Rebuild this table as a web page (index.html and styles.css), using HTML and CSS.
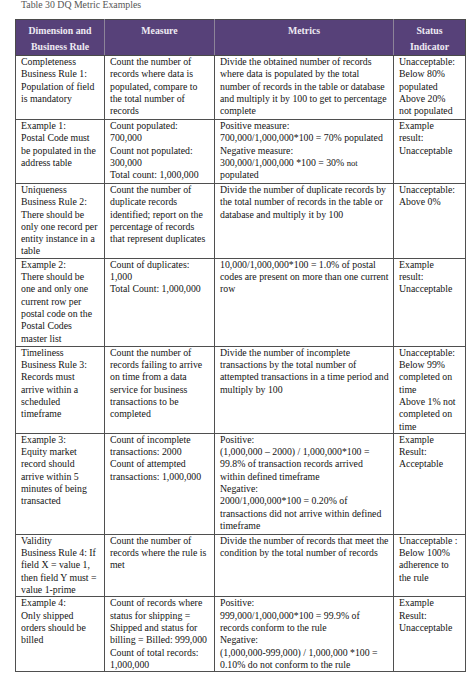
FILE: index.html
```html
<!DOCTYPE html>
<html lang="en">
<head>
<meta charset="utf-8">
<title>Table 30 DQ Metric Examples</title>
<link rel="stylesheet" href="styles.css">
</head>
<body>
<div class="caption">Table 30 DQ Metric Examples</div>
<table class="dq">
  <colgroup>
    <col class="c1"><col class="c2"><col class="c3"><col class="c4">
  </colgroup>
  <thead>
    <tr>
      <th>Dimension and<br>Business Rule</th>
      <th>Measure</th>
      <th>Metrics</th>
      <th>Status<br>Indicator</th>
    </tr>
  </thead>
  <tbody>
    <tr class="r1">
      <td>Completeness<br>Business Rule 1:<br>Population of field<br>is mandatory</td>
      <td>Count the number of<br>records where data is<br>populated, compare to<br>the total number of<br>records</td>
      <td>Divide the obtained number of records<br>where data is populated by the total<br>number of records in the table or database<br>and multiply it by 100 to get to percentage<br>complete</td>
      <td>Unacceptable:<br>Below 80%<br>populated<br>Above 20%<br>not populated</td>
    </tr>
    <tr class="r2">
      <td>Example 1:<br>Postal Code must<br>be populated in the<br>address table</td>
      <td>Count populated:<br>700,000<br>Count not populated:<br>300,000<br>Total count: 1,000,000</td>
      <td>Positive measure:<br>700,000/1,000,000*100 = 70% populated<br>Negative measure:<br>300,000/1,000,000 *100 = 30% <span class="small">not</span><br>populated</td>
      <td>Example<br>result:<br>Unacceptable</td>
    </tr>
    <tr class="r3">
      <td>Uniqueness<br>Business Rule 2:<br>There should be<br>only one record per<br>entity instance in a<br>table</td>
      <td>Count the number of<br>duplicate records<br>identified; report on the<br>percentage of records<br>that represent duplicates</td>
      <td>Divide the number of duplicate records by<br>the total number of records in the table or<br>database and multiply it by 100</td>
      <td>Unacceptable:<br>Above 0%</td>
    </tr>
    <tr class="r4">
      <td>Example 2:<br>There should be<br>one and only one<br>current row per<br>postal code on the<br>Postal Codes<br>master list</td>
      <td>Count of duplicates:<br>1,000<br>Total Count: 1,000,000</td>
      <td>10,000/1,000,000*100 = 1.0% of postal<br>codes are present on more than one current<br>row</td>
      <td>Example<br>result:<br>Unacceptable</td>
    </tr>
    <tr class="r5">
      <td>Timeliness<br>Business Rule 3:<br>Records must<br>arrive within a<br>scheduled<br>timeframe</td>
      <td>Count the number of<br>records failing to arrive<br>on time from a data<br>service for business<br>transactions to be<br>completed</td>
      <td>Divide the number of incomplete<br>transactions by the total number of<br>attempted transactions in a time period and<br>multiply by 100</td>
      <td>Unacceptable:<br>Below 99%<br>completed on<br>time<br>Above 1% not<br>completed on<br>time</td>
    </tr>
    <tr class="r6">
      <td>Example 3:<br>Equity market<br>record should<br>arrive within 5<br>minutes of being<br>transacted</td>
      <td>Count of incomplete<br>transactions: 2000<br>Count of attempted<br>transactions: 1,000,000</td>
      <td>Positive:<br>(1,000,000 – 2000) / 1,000,000*100 =<br>99.8% of transaction records arrived<br>within defined timeframe<br>Negative:<br>2000/1,000,000*100 = 0.20% of<br>transactions did not arrive within defined<br>timeframe</td>
      <td>Example<br>Result:<br>Acceptable</td>
    </tr>
    <tr class="r7">
      <td>Validity<br>Business Rule 4: If<br>field X = value 1,<br>then field Y must =<br>value 1-prime</td>
      <td>Count the number of<br>records where the rule is<br>met</td>
      <td>Divide the number of records that meet the<br>condition by the total number of records</td>
      <td>Unacceptable :<br>Below 100%<br>adherence to<br>the rule</td>
    </tr>
    <tr class="r8">
      <td>Example 4:<br>Only shipped<br>orders should be<br>billed</td>
      <td>Count of records where<br>status for shipping =<br>Shipped and status for<br>billing = Billed: 999,000<br>Count of total records:<br>1,000,000</td>
      <td>Positive:<br>999,000/1,000,000*100 = 99.9% of<br>records conform to the rule<br>Negative:<br>(1,000,000-999,000) / 1,000,000 *100 =<br>0.10% do not conform to the rule</td>
      <td>Example<br>Result:<br>Unacceptable</td>
    </tr>
  </tbody>
</table>
</body>
</html>
```

FILE: styles.css
```css
html, body {
  margin: 0;
  padding: 0;
  background: #ffffff;
}

body {
  font-family: "Liberation Serif", "Times New Roman", serif;
  color: #141414;
  overflow: hidden;
}

.caption {
  margin: 0 0 0 21px;
  height: 9px;
  line-height: 9px;
  font-size: 9.8px;
  color: #555555;
}

.dq {
  margin: 10px 0 0 15px;
  width: 451px;
  border-collapse: collapse;
  table-layout: fixed;
  font-size: 9.8px;
  line-height: 12.3px;
}

.c1 { width: 89px; }
.c2 { width: 110px; }
.c3 { width: 179px; }
.c4 { width: 72px; }

.dq th {
  background: #574179;
  color: #eeeaf3;
  font-weight: bold;
  text-align: center;
  vertical-align: top;
  line-height: 16px;
  height: 34px;
  padding: 3px 4px 0;
  box-sizing: border-box;
  border: 1px solid #4a4a4a;
  border-left-color: #8d8499;
  border-right-color: #8d8499;
  white-space: nowrap;
}

.dq th:first-child { border-left-color: #4a4a4a; }
.dq th:last-child { border-right-color: #4a4a4a; }

.dq td {
  border: 1px solid #4f4f4f;
  vertical-align: top;
  padding: 0 3px 0 5px;
  white-space: nowrap;
  overflow: hidden;
  box-sizing: border-box;
}

.small { font-size: 8.6px; }

.r1 td { height: 64px; }
.r2 td { height: 64px; }
.r3 td { height: 73px; }
.r4 td { height: 88px; }
.r5 td { height: 87px; }
.r6 td { height: 101px; }
.r7 td { height: 62px; }
.r8 td { height: 75px; }
```
